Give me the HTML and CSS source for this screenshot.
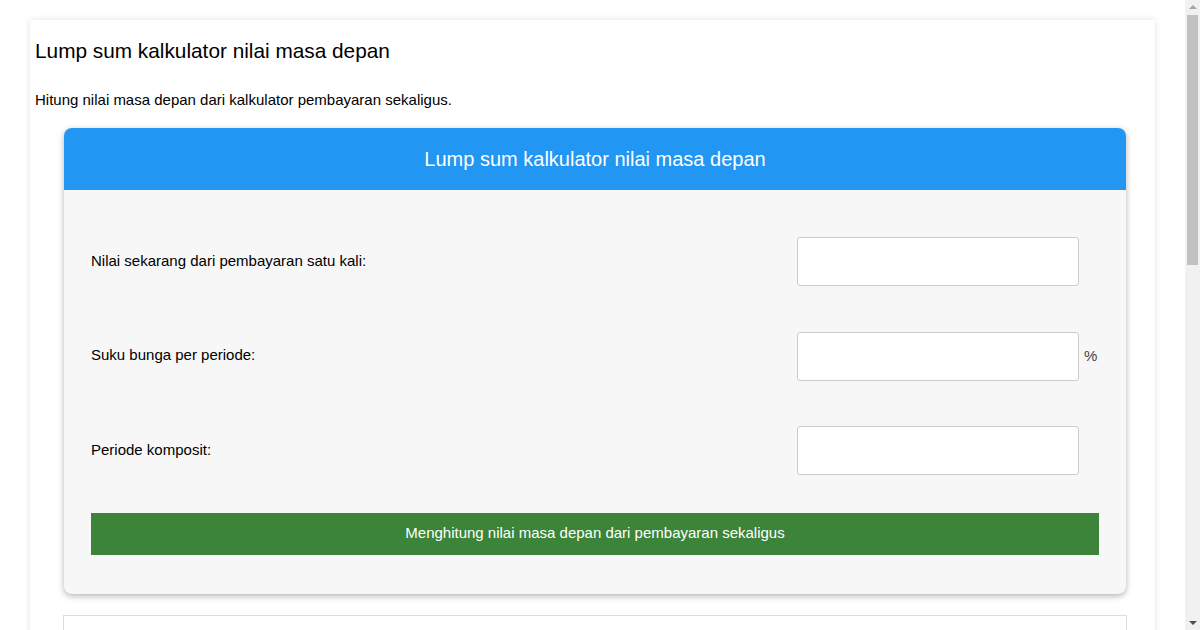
FILE: index.html
```html
<!DOCTYPE html>
<html lang="id">
<head>
    <meta charset="UTF-8">
    <title>Lump sum kalkulator nilai masa depan</title>
    <link rel="stylesheet" href="styles.css">
</head>
<body>
    <div class="page">
        <h1>Lump sum kalkulator nilai masa depan</h1>
        <p class="intro">Hitung nilai masa depan dari kalkulator pembayaran sekaligus.</p>

        <div class="calc">
            <div class="calc-head">Lump sum kalkulator nilai masa depan</div>
            <div class="calc-body">
                <div class="row">
                    <label for="pv">Nilai sekarang dari pembayaran satu kali:</label>
                    <div class="field"><input type="text" id="pv"></div>
                </div>
                <div class="row">
                    <label for="rate">Suku bunga per periode:</label>
                    <div class="field"><input type="text" id="rate"><span class="unit">%</span></div>
                </div>
                <div class="row">
                    <label for="n">Periode komposit:</label>
                    <div class="field"><input type="text" id="n"></div>
                </div>
                <button class="calc-btn">Menghitung nilai masa depan dari pembayaran sekaligus</button>
            </div>
        </div>

        <div class="result"></div>
    </div>

    <!-- page scrollbar as it shows in the screenshot -->
    <div class="scrollbar">
        <span class="arrow up"></span>
        <span class="thumb"></span>
        <span class="arrow down"></span>
    </div>
</body>
</html>
```

FILE: styles.css
```css
html, body {
    margin: 0;
    padding: 0;
}
body {
    padding-right: 15px;
    background: #fff;
    font-family: "Liberation Sans", Arial, sans-serif;
    color: #000;
}
.page {
    width: 1115px;
    margin: 20px auto 40px;
    padding: 0 5px 20px;
    background: #fff;
    box-shadow: 0 0 6px rgba(0,0,0,0.12);
}
h1 {
    margin: 0;
    padding-top: 19px;
    font-size: 20.8px;
    font-weight: normal;
    line-height: 24px;
}
.intro {
    margin: 28px 0 0;
    font-size: 15px;
    line-height: 18px;
}
.calc {
    width: 1062px;
    margin: 19px 0 0 29px;
    border-radius: 8px;
    background: #f7f7f7;
    box-shadow: 0 2px 6px rgba(0,0,0,0.3);
}
.calc-head {
    height: 62px;
    line-height: 62px;
    text-align: center;
    font-size: 20px;
    color: #fff;
    background: #2196f3;
    border-radius: 8px 8px 0 0;
}
.calc-body {
    padding: 24px 27px 39px;
}
.row {
    display: flex;
    align-items: center;
    padding: 23px 0 22.5px;
}
.row label {
    flex: 1;
    font-size: 15px;
    margin-top: -3px;
}
.field {
    width: 302px;
    display: flex;
    align-items: center;
}
.field input {
    box-sizing: border-box;
    width: 282px;
    height: 49px;
    border: 1px solid #ccc;
    border-radius: 3px;
    background: #fff;
}
.unit {
    margin-left: 5px;
    margin-top: -2px;
    font-size: 15px;
    color: #444;
}
.calc-btn {
    display: block;
    width: 100%;
    height: 42px;
    margin-top: 15.5px;
    padding: 0 0 3px;
    border: none;
    background: #3b8439;
    color: #fff;
    font-family: "Liberation Sans", Arial, sans-serif;
    font-size: 15px;
}
.result {
    width: 1062px;
    height: 820px;
    margin: 21px 0 0 28px;
    border: 1px solid #ddd;
    background: #fff;
}
.scrollbar {
    position: fixed;
    top: 0;
    right: 0;
    width: 15px;
    height: 100%;
    background: #f1f1f1;
}
.thumb {
    position: absolute;
    top: 15px;
    left: 2px;
    width: 11px;
    height: 250px;
    background: #c1c1c1;
}
.arrow {
    position: absolute;
    left: 4px;
    width: 0;
    height: 0;
    border-left: 4px solid transparent;
    border-right: 4px solid transparent;
}
.arrow.up {
    top: 5px;
    border-bottom: 4px solid #a3a3a3;
}
.arrow.down {
    bottom: 5px;
    border-top: 4px solid #505050;
}
```
